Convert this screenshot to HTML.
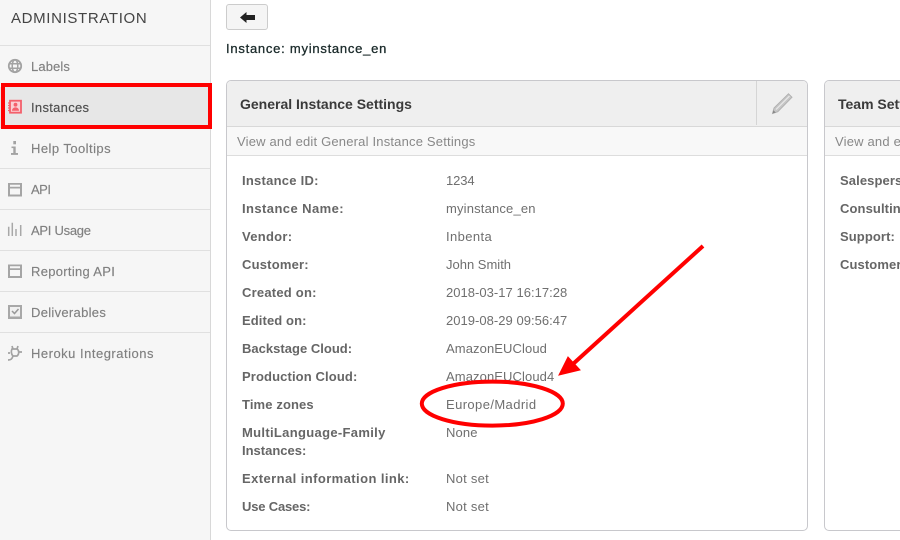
<!DOCTYPE html>
<html><head><meta charset="utf-8">
<style>
html,body{margin:0;padding:0;width:900px;height:540px;overflow:hidden;background:#fff}
body{position:relative;font-family:"Liberation Sans","DejaVu Sans",sans-serif;font-size:13px}
div,span{position:absolute;white-space:nowrap}
.sb{left:0;top:0;width:210px;height:540px;background:#f6f6f6;border-right:1px solid #d8d8d8}
.ln{left:0;width:210px;height:1px;background:#e0e0e0}
.it{left:31px;font-size:13px;color:#808080;line-height:18px;-webkit-text-stroke:.15px #808080}
.k{left:242px;font-weight:bold;color:#666;line-height:18px}
.v{left:446px;color:#6f6f6f;line-height:18px}
svg{position:absolute;overflow:visible}
</style></head><body>
<div class="sb"></div>
<div style="left:11px;top:10px;font-size:15px;line-height:18px;color:#444;letter-spacing:.65px">ADMINISTRATION</div>
<div class="ln" style="top:45px"></div>
<div class="ln" style="top:127px"></div>
<div class="ln" style="top:168px"></div>
<div class="ln" style="top:209px"></div>
<div class="ln" style="top:250px"></div>
<div class="ln" style="top:291px"></div>
<div class="ln" style="top:332px"></div>
<div style="left:0;top:87px;width:210px;height:40px;background:#e7e7e7"></div>

<div class="it" style="top:58px;letter-spacing:.12px">Labels</div>
<div class="it" style="top:99px;color:#4d4d4d;-webkit-text-stroke:.15px #4d4d4d;letter-spacing:.3px">Instances</div>
<div class="it" style="top:140px;letter-spacing:.45px">Help Tooltips</div>
<div class="it" style="top:181px;letter-spacing:-.5px">API</div>
<div class="it" style="top:222px;letter-spacing:-.27px">API Usage</div>
<div class="it" style="top:263px;letter-spacing:.3px">Reporting API</div>
<div class="it" style="top:304px;letter-spacing:.3px">Deliverables</div>
<div class="it" style="top:345px;letter-spacing:.5px">Heroku Integrations</div>

<svg style="left:0;top:0" width="40" height="370" fill="none">
<g stroke="#a3a3a3" stroke-width="1.8">
<circle cx="15" cy="66" r="6.2"/><ellipse cx="15" cy="66" rx="2.8" ry="6.2" stroke-width="1.5"/><path d="M9 63.8h12M9 68.200h12" stroke-width="1.5"/>
</g>
<rect x="10" y="100.700" width="11" height="12" fill="#fbd0d4" stroke="#f4606c" stroke-width="1.8"/>
<path d="M8 103h2.500M8 105.500h2.500M8 108h2.500M8 110.500h2.500" stroke="#f4606c" stroke-width="1.200"/>
<circle cx="15.500" cy="104.700" r="1.900" fill="#f4606c"/><path d="M12 110.800c0-4.500 7-4.500 7 0z" fill="#f4606c"/>
<g fill="#a3a3a3">
<rect x="13.300" y="141" width="2.700" height="3.300"/>
<rect x="11.500" y="146.500" width="4" height="1.600"/>
<rect x="13.300" y="146.500" width="2.400" height="7.500"/>
<rect x="11" y="153" width="7" height="1.900"/>
</g>
<g fill="#a5a5a5">
<path fill-rule="evenodd" d="M8 183h14v13.500H8zM10 188.500v6h10v-6zM10 184.700v2h10v-2z"/>
<path fill-rule="evenodd" d="M8 264.500h14v13.500H8zM10 270v6h10v-6zM10 266.200v2h10v-2z"/>
</g>
<path d="M8.700 226.700V236M12.300 222.700V236M16 229V236M20.700 225V236" stroke="#a8a8a8" stroke-width="1.500"/>
<rect x="8" y="305" width="14" height="14" fill="#a8a8a8"/><rect x="10" y="307" width="10" height="9.500" fill="#f0f0f0"/>
<path d="M12 311l2.500 2.500 4-4.500" stroke="#999" stroke-width="1.500"/>
<g stroke="#a3a3a3" stroke-width="1.700">
<path d="M12 349h5c2 1 2.500 5 0 7h-4c-2-2-2-5-1-7z"/><path d="M12 346l1 3M18 346l-1 3M19 352h3M10 353H8M13 356c-1 3-2 4-5 4"/>
</g>
</svg>

<div style="left:1px;top:83px;width:203px;height:38px;border:4px solid #f00;box-sizing:content-box"></div>

<div style="left:226px;top:4px;width:40px;height:24px;background:#f5f5f5;border:1px solid #ccc;border-radius:3px"></div>
<svg style="left:240px;top:12px" width="16" height="12"><path d="M0 5.500L6.500 0v3h8.500v5H6.500v3z" fill="#222"/></svg>
<div style="left:226px;top:40px;font-size:13px;line-height:18px;color:#1a2a2a;letter-spacing:.75px;-webkit-text-stroke:.3px #1a2a2a">Instance: myinstance_en</div>

<div style="left:226px;top:80px;width:580px;height:449px;border:1px solid #c8c8cc;border-radius:5px;overflow:hidden;background:#fff">
<div style="left:0;top:0;width:580px;height:45px;background:#efefef;border-bottom:1px solid #d8d8d8"></div>
<div style="left:0;top:46px;width:580px;height:28px;background:#f8f8f8;border-bottom:1px solid #ddd"></div>
<div style="left:529px;top:0;width:1px;height:44px;background:#d5d5d5"></div>
</div>
<div style="left:240px;top:95px;font-size:14px;font-weight:bold;line-height:18px;color:#3a3a3a">General Instance Settings</div>
<div style="left:237px;top:133px;font-size:13px;line-height:18px;color:#888;letter-spacing:.19px">View and edit General Instance Settings</div>
<svg style="left:771px;top:92px" width="22" height="24" fill="none">
<path d="M1.500 21.500l1.500-5.500L17.500 1.800l3.500 3.400L6.800 19.700z" fill="#c6c6c6" stroke="#b0b0b0" stroke-width=".9"/><path d="M5 17.500L18.500 4" stroke="#eee" stroke-width=".9"/><path d="M1.500 21.500l.9-3.300 2.400 2.300z" fill="#888"/>
</svg>

<div style="left:824px;top:80px;width:90px;height:449px;border:1px solid #c8c8cc;border-radius:5px;overflow:hidden;background:#fff">
<div style="left:0;top:0;width:90px;height:45px;background:#efefef;border-bottom:1px solid #d8d8d8"></div>
<div style="left:0;top:46px;width:90px;height:28px;background:#f8f8f8;border-bottom:1px solid #ddd"></div>
</div>
<div style="left:838px;top:95px;font-size:14px;font-weight:bold;line-height:18px;color:#3a3a3a">Team Sett</div>
<div style="left:835px;top:133px;line-height:18px;color:#888;letter-spacing:.19px">View and e</div>
<div class="k" style="left:840px;top:172px;letter-spacing:.1px">Salespers</div>
<div class="k" style="left:840px;top:200px;letter-spacing:.1px">Consultin</div>
<div class="k" style="left:840px;top:228px;letter-spacing:.1px">Support:</div>
<div class="k" style="left:840px;top:256px;letter-spacing:.1px">Customer</div>

<div class="k" style="top:172px;letter-spacing:.25px">Instance ID:</div><div class="v" style="top:172px;letter-spacing:-.1px">1234</div>
<div class="k" style="top:200px;letter-spacing:.42px">Instance Name:</div><div class="v" style="top:200px;letter-spacing:.17px">myinstance_en</div>
<div class="k" style="top:228px;letter-spacing:.28px">Vendor:</div><div class="v" style="top:228px;letter-spacing:.4px">Inbenta</div>
<div class="k" style="top:256px;letter-spacing:.2px">Customer:</div><div class="v" style="top:256px;letter-spacing:0">John Smith</div>
<div class="k" style="top:284px;letter-spacing:.22px">Created on:</div><div class="v" style="top:284px;letter-spacing:.03px">2018-03-17 16:17:28</div>
<div class="k" style="top:312px;letter-spacing:.1px">Edited on:</div><div class="v" style="top:312px;letter-spacing:.03px">2019-08-29 09:56:47</div>
<div class="k" style="top:340px;letter-spacing:.02px">Backstage Cloud:</div><div class="v" style="top:340px;letter-spacing:.1px">AmazonEUCloud</div>
<div class="k" style="top:368px;letter-spacing:.12px">Production Cloud:</div><div class="v" style="top:368px;letter-spacing:.1px">AmazonEUCloud4</div>
<div class="k" style="top:396px;letter-spacing:.12px">Time zones</div><div class="v" style="top:396px;letter-spacing:.4px">Europe/Madrid</div>
<div class="k" style="top:424px;letter-spacing:.32px">MultiLanguage-Family</div><div class="k" style="top:442px;letter-spacing:0">Instances:</div><div class="v" style="top:424px;letter-spacing:.15px">None</div>
<div class="k" style="top:470px;letter-spacing:.42px">External information link:</div><div class="v" style="top:470px;letter-spacing:.25px">Not set</div>
<div class="k" style="top:498px;letter-spacing:-.18px">Use Cases:</div><div class="v" style="top:498px;letter-spacing:.25px">Not set</div>

<svg style="left:0;top:0" width="900" height="540" fill="none">
<path d="M703 246L573 364" stroke="#f00" stroke-width="4"/>
<path d="M559 375L568 357L580 370z" fill="#f00" stroke="#f00" stroke-width="1"/>
<ellipse cx="492.300" cy="403.600" rx="70.500" ry="22" stroke="#f00" stroke-width="4"/>
</svg>
</body></html>
